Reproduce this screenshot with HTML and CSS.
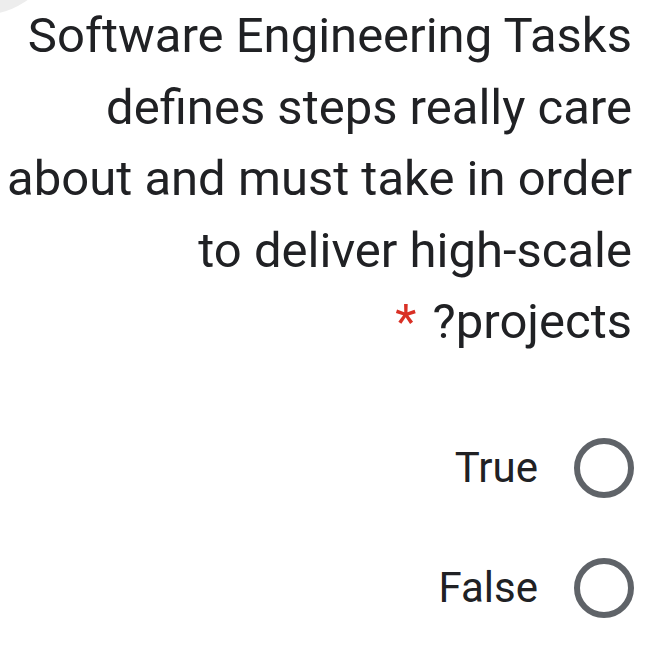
FILE: index.html
```html
<!DOCTYPE html>
<html lang="en">
<head>
<meta charset="utf-8">
<title>Question</title>
<link rel="stylesheet" href="styles.css">
</head>
<body>
<div class="corner"></div>
<div class="question">
  <div class="title">
    <span class="line">Software Engineering Tasks</span>
    <span class="line">defines steps really care</span>
    <span class="line">about and must take in order</span>
    <span class="line">to deliver high-scale</span>
    <span class="line"><span class="req">*</span> ?projects</span>
  </div>
  <div class="options">
    <label class="option"><span class="opt-text">True</span><span class="radio"></span></label>
    <label class="option"><span class="opt-text">False</span><span class="radio"></span></label>
  </div>
</div>
</body>
</html>
```
FILE: styles.css
```css
html, body {
  margin: 0;
  padding: 0;
  background: #ffffff;
}
body {
  width: 661px;
  height: 663px;
  overflow: hidden;
  position: relative;
  font-family: Roboto, "Noto Sans", sans-serif;
  color: #202124;
}
.corner {
  position: absolute;
  left: -99px;
  top: -145px;
  width: 160px;
  height: 160px;
  border-radius: 50%;
  background: #ededed;
}
.question {
  text-align: right;
}
.title {
  padding: 0 29px 0 0;
}
.line {
  display: block;
  font-size: 49px;
  line-height: 71.5px;
  white-space: nowrap;
}
.req {
  color: #d93025;
  margin-right: 4px;
}
.options {
  display: flex;
  flex-direction: column;
  align-items: flex-end;
  gap: 60px;
  margin-top: 80px;
  padding-right: 27px;
}
.option {
  display: flex;
  align-items: center;
  gap: 36px;
  height: 60px;
}
.opt-text {
  font-size: 42px;
}
.radio {
  box-sizing: border-box;
  width: 60px;
  height: 60px;
  border: 6.5px solid #5f6368;
  border-radius: 50%;
}
```
